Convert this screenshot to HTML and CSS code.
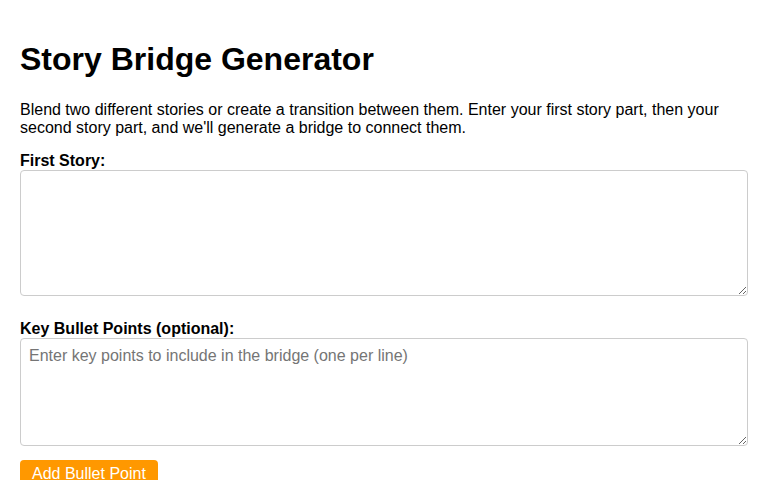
FILE: index.html
```html
<!DOCTYPE html>
<html lang="en">
<head>
    <meta charset="UTF-8">
    <meta name="viewport" content="width=device-width, initial-scale=1.0">
    <title>Story Bridge Generator</title>
    <link rel="stylesheet" href="styles.css">
</head>
<body>
    <div class="container">
        <h1>Story Bridge Generator</h1>
        <p>Blend two different stories or create a transition between them. Enter your first story part, then your second story part, and we'll generate a bridge to connect them.</p>

        <form>
            <div class="form-group">
                <label for="story1">First Story:</label>
                <textarea id="story1" class="story-input"></textarea>
            </div>

            <div class="form-group">
                <label for="bullets">Key Bullet Points (optional):</label>
                <textarea id="bullets" class="bullet-input" placeholder="Enter key points to include in the bridge (one per line)"></textarea>
            </div>

            <button type="button" class="btn-add">Add Bullet Point</button>
        </form>
    </div>
</body>
</html>
```

FILE: styles.css
```css
        body {
            margin: 0;
            padding: 20px;
            background-color: #fff;
            color: #000;
            font-family: "Liberation Sans", Arial, sans-serif;
        }

        h1 {
            font-size: 32px;
            margin: 21px 0 23px;
        }

        p {
            margin: 16px 0 15px;
        }

        /* Form fields */
        .form-group {
            margin-bottom: 24px;
        }

        .form-group:last-of-type {
            margin-bottom: 14px;
        }

        .form-group label {
            display: block;
            font-weight: bold;
        }

        textarea {
            display: block;
            box-sizing: border-box;
            width: 100%;
            padding: 8px;
            border: 1px solid #ccc;
            border-radius: 4px;
            font-family: "Liberation Sans", Arial, sans-serif;
            font-size: 16px;
        }

        .story-input {
            height: 126px;
        }

        .bullet-input {
            height: 108px;
        }

        .btn-add {
            background-color: #ff9800;
            color: #fff;
            border: none;
            border-radius: 4px;
            padding: 5px 12px;
            font-family: "Liberation Sans", Arial, sans-serif;
            font-size: 16px;
            cursor: pointer;
        }
```
